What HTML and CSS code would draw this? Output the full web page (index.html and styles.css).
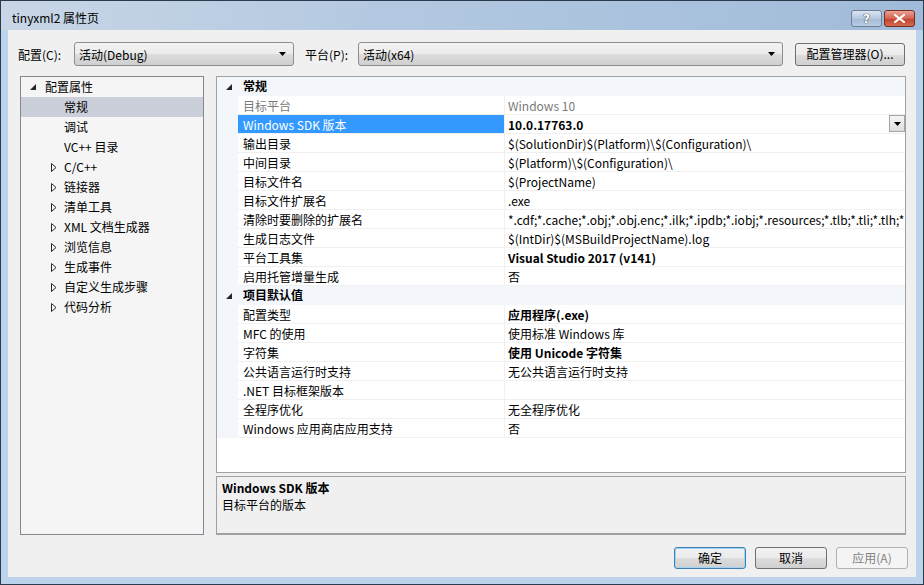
FILE: index.html
```html
<!DOCTYPE html>
<html lang="zh-CN">

<head>
    <meta charset="utf-8">
    <title>tinyxml2 属性页</title>
    <link rel="stylesheet" href="styles.css">
</head>

<body>
    <div class="window">
        <!-- titellinje med hjælp/luk -->
        <div class="titlebar">
            <span class="title">tinyxml2 属性页</span>
            <div class="caption">
                <span class="cap-btn cap-help">?</span>
                <span class="cap-btn cap-close">
                    <svg width="11" height="9" viewBox="0 0 11 9"><path d="M1 1 L10 8 M10 1 L1 8" stroke="#fff" stroke-width="2.2" stroke-linecap="square"/></svg>
                </span>
            </div>
        </div>

        <div class="client">
            <!-- konfiguration og platform -->
            <div class="toolbar">
                <span class="lbl">配置(C):</span>
                <div class="combo combo-config">
                    <span>活动(Debug)</span>
                    <svg class="arrow" width="7" height="4" viewBox="0 0 7 4"><path d="M0 0 H7 L3.5 4 Z" fill="#000"/></svg>
                </div>
                <span class="lbl lbl-platform">平台(P):</span>
                <div class="combo combo-platform">
                    <span>活动(x64)</span>
                    <svg class="arrow" width="7" height="4" viewBox="0 0 7 4"><path d="M0 0 H7 L3.5 4 Z" fill="#000"/></svg>
                </div>
                <button class="btn btn-manager">配置管理器(O)...</button>
            </div>

            <div class="main">
                <!-- træ med kategorier -->
                <ul class="tree">
                    <li class="node open"><svg class="tw" width="6" height="6" viewBox="0 0 6 6"><path d="M6 0 V6 H0 Z" fill="#262626"/></svg>配置属性</li>
                    <li class="leaf selected">常规</li>
                    <li class="leaf">调试</li>
                    <li class="leaf">VC++ 目录</li>
                    <li class="leaf closed"><svg class="tw" width="6" height="9" viewBox="0 0 6 9"><path d="M0.5 0.5 L5 4.5 L0.5 8.5 Z" fill="none" stroke="#262626"/></svg>C/C++</li>
                    <li class="leaf closed"><svg class="tw" width="6" height="9" viewBox="0 0 6 9"><path d="M0.5 0.5 L5 4.5 L0.5 8.5 Z" fill="none" stroke="#262626"/></svg>链接器</li>
                    <li class="leaf closed"><svg class="tw" width="6" height="9" viewBox="0 0 6 9"><path d="M0.5 0.5 L5 4.5 L0.5 8.5 Z" fill="none" stroke="#262626"/></svg>清单工具</li>
                    <li class="leaf closed"><svg class="tw" width="6" height="9" viewBox="0 0 6 9"><path d="M0.5 0.5 L5 4.5 L0.5 8.5 Z" fill="none" stroke="#262626"/></svg>XML 文档生成器</li>
                    <li class="leaf closed"><svg class="tw" width="6" height="9" viewBox="0 0 6 9"><path d="M0.5 0.5 L5 4.5 L0.5 8.5 Z" fill="none" stroke="#262626"/></svg>浏览信息</li>
                    <li class="leaf closed"><svg class="tw" width="6" height="9" viewBox="0 0 6 9"><path d="M0.5 0.5 L5 4.5 L0.5 8.5 Z" fill="none" stroke="#262626"/></svg>生成事件</li>
                    <li class="leaf closed"><svg class="tw" width="6" height="9" viewBox="0 0 6 9"><path d="M0.5 0.5 L5 4.5 L0.5 8.5 Z" fill="none" stroke="#262626"/></svg>自定义生成步骤</li>
                    <li class="leaf closed"><svg class="tw" width="6" height="9" viewBox="0 0 6 9"><path d="M0.5 0.5 L5 4.5 L0.5 8.5 Z" fill="none" stroke="#262626"/></svg>代码分析</li>
                </ul>

                <div class="pane">
                    <!-- egenskabsgitter -->
                    <div class="grid">
                        <div class="cat"><span class="gut"><svg width="6" height="6" viewBox="0 0 6 6"><path d="M6 0 V6 H0 Z" fill="#262626"/></svg></span><span class="cat-name">常规</span></div>
                        <div class="row dim"><span class="gut"></span><span class="name">目标平台</span><span class="val">Windows 10</span></div>
                        <div class="row active"><span class="gut"></span><span class="name">Windows SDK 版本</span><span class="val bold">10.0.17763.0<span class="drop"><svg width="7" height="4" viewBox="0 0 7 4"><path d="M0 0 H7 L3.5 4 Z" fill="#000"/></svg></span></span></div>
                        <div class="row"><span class="gut"></span><span class="name">输出目录</span><span class="val">$(SolutionDir)$(Platform)\$(Configuration)\</span></div>
                        <div class="row"><span class="gut"></span><span class="name">中间目录</span><span class="val">$(Platform)\$(Configuration)\</span></div>
                        <div class="row"><span class="gut"></span><span class="name">目标文件名</span><span class="val">$(ProjectName)</span></div>
                        <div class="row"><span class="gut"></span><span class="name">目标文件扩展名</span><span class="val">.exe</span></div>
                        <div class="row"><span class="gut"></span><span class="name">清除时要删除的扩展名</span><span class="val">*.cdf;*.cache;*.obj;*.obj.enc;*.ilk;*.ipdb;*.iobj;*.resources;*.tlb;*.tli;*.tlh;*</span></div>
                        <div class="row"><span class="gut"></span><span class="name">生成日志文件</span><span class="val">$(IntDir)$(MSBuildProjectName).log</span></div>
                        <div class="row"><span class="gut"></span><span class="name">平台工具集</span><span class="val bold">Visual Studio 2017 (v141)</span></div>
                        <div class="row"><span class="gut"></span><span class="name">启用托管增量生成</span><span class="val">否</span></div>
                        <div class="cat"><span class="gut"><svg width="6" height="6" viewBox="0 0 6 6"><path d="M6 0 V6 H0 Z" fill="#262626"/></svg></span><span class="cat-name">项目默认值</span></div>
                        <div class="row"><span class="gut"></span><span class="name">配置类型</span><span class="val bold">应用程序(.exe)</span></div>
                        <div class="row"><span class="gut"></span><span class="name">MFC 的使用</span><span class="val">使用标准 Windows 库</span></div>
                        <div class="row"><span class="gut"></span><span class="name">字符集</span><span class="val bold">使用 Unicode 字符集</span></div>
                        <div class="row"><span class="gut"></span><span class="name">公共语言运行时支持</span><span class="val">无公共语言运行时支持</span></div>
                        <div class="row"><span class="gut"></span><span class="name">.NET 目标框架版本</span><span class="val"></span></div>
                        <div class="row"><span class="gut"></span><span class="name">全程序优化</span><span class="val">无全程序优化</span></div>
                        <div class="row"><span class="gut"></span><span class="name">Windows 应用商店应用支持</span><span class="val">否</span></div>
                    </div>

                    <!-- beskrivelse af valgt egenskab -->
                    <div class="desc">
                        <p class="desc-title">Windows SDK 版本</p>
                        <p class="desc-text">目标平台的版本</p>
                    </div>
                </div>
            </div>

            <div class="footer">
                <button class="btn btn-ok">确定</button>
                <button class="btn">取消</button>
                <button class="btn btn-off">应用(A)</button>
            </div>
        </div>
    </div>
</body>

</html>
```

FILE: styles.css
```css
body {
    margin: 0;
    padding: 0;
    font-family: "Noto Sans CJK SC", "Noto Sans", sans-serif;
    font-size: 12px;
    color: #000;
}

.window {
    width: 924px;
    height: 585px;
    box-sizing: border-box;
    border: 1px solid #2b3a4c;
    background-color: #bcd3eb;
    display: flex;
    flex-direction: column;
}

.titlebar {
    height: 29px;
    display: flex;
    justify-content: space-between;
    background: linear-gradient(to right, #c8d6e6 0%, #b4c9e1 40%, #a0bbd9 100%);
}

.title {
    padding-left: 11px;
    line-height: 34px;
}

.caption {
    display: flex;
    padding-top: 9px;
    padding-right: 8px;
}

.cap-btn {
    width: 31px;
    height: 17px;
    box-sizing: border-box;
    border: 1px solid #6b7f96;
    border-radius: 3px;
    display: flex;
    align-items: center;
    justify-content: center;
}

.cap-help {
    background: linear-gradient(#dbe6f2, #b5c8de 50%, #a3bad6 51%, #b9cde3);
    color: #fff;
    font-family: "DejaVu Sans", sans-serif;
    font-weight: bold;
    font-size: 12px;
    text-shadow: 0 0 1px #333, 0 0 1px #333;
    margin-right: 2px;
}

.cap-close {
    border-color: #7a2b22;
    background: linear-gradient(#e8a296, #d3624f 50%, #c2402c 51%, #d16a52);
}

.client {
    flex: 1;
    margin: 0 7px 7px;
    background-color: #f0f0f0;
    display: flex;
    flex-direction: column;
}

/* konfigurationslinje */
.toolbar {
    display: flex;
    align-items: center;
    height: 24px;
    margin-top: 12px;
    padding-left: 10px;
}

.lbl {
    width: 56px;
}

.lbl-platform {
    margin-left: 11px;
    width: 53px;
}

.combo {
    height: 24px;
    box-sizing: border-box;
    border: 1px solid #8d8d8d;
    border-radius: 3px;
    background: linear-gradient(#f3f3f3, #ebebeb 50%, #dddddd 51%, #cfcfcf);
    display: flex;
    align-items: center;
    justify-content: space-between;
    padding: 0 7px 0 4px;
}

.combo-config {
    width: 220px;
}

.combo-platform {
    width: 425px;
}

.btn {
    width: 72px;
    height: 22px;
    box-sizing: border-box;
    border: 1px solid #707070;
    border-radius: 3px;
    background: linear-gradient(#f2f2f2, #ebebeb 50%, #dddddd 51%, #cfcfcf);
    font-family: "Noto Sans CJK SC", sans-serif;
    font-size: 12px;
    color: #000;
    padding: 0;
    line-height: 18px;
}

.btn-manager {
    width: 110px;
    height: 23px;
    margin-left: 12px;
}

/* hovedområde */
.main {
    display: flex;
    margin-top: 10px;
    height: 459px;
    padding-left: 12px;
}

.tree {
    list-style: none;
    margin: 0;
    padding: 0;
    width: 184px;
    box-sizing: border-box;
    border: 1px solid #828790;
    background-color: #f5f5f5;
}

.tree li {
    height: 20px;
    line-height: 20px;
    position: relative;
    padding-left: 43px;
}

.tree .node {
    padding-left: 24px;
}

.tree .selected {
    background-color: #cbcfda;
}

.tree .node .tw {
    position: absolute;
    left: 9px;
    top: 7px;
}

.tree .closed .tw {
    position: absolute;
    left: 30px;
    top: 6px;
}

.pane {
    margin-left: 12px;
    width: 690px;
    display: flex;
    flex-direction: column;
}

.grid {
    height: 397px;
    box-sizing: border-box;
    border: 1px solid #a0a0a0;
    background-color: #fff;
}

.cat,
.row {
    display: flex;
    height: 19px;
    line-height: 18px;
}

.cat {
    background-color: #f3f6fb;
    font-weight: bold;
}

.gut {
    width: 21px;
    flex-shrink: 0;
    background-color: #f3f6fb;
    position: relative;
}

.gut svg {
    position: absolute;
    left: 9px;
    top: 7px;
}

.cat-name {
    padding-left: 5px;
}

.name {
    width: 261px;
    padding-left: 5px;
    padding-top: 1px;
    line-height: 17px;
    border-bottom: 1px solid #f0f0f0;
    border-right: 1px solid #f0f0f0;
    white-space: nowrap;
}

.val {
    flex: 1;
    padding-left: 3px;
    padding-top: 1px;
    line-height: 17px;
    border-bottom: 1px solid #f0f0f0;
    white-space: nowrap;
    overflow: hidden;
    position: relative;
}

.bold {
    font-weight: bold;
}

.dim .name,
.dim .val {
    color: #7a7a7a;
}

.active .name {
    background-color: #3399ff;
    color: #fff;
}

.drop {
    position: absolute;
    right: 0;
    top: 0;
    width: 16px;
    height: 17px;
    box-sizing: border-box;
    border: 1px solid #a5a5a5;
    background: linear-gradient(#f6f6f6, #dedede);
    display: flex;
    align-items: center;
    justify-content: center;
}

.desc {
    margin-top: 3px;
    height: 59px;
    box-sizing: border-box;
    border: 1px solid #a0a0a0;
    border-bottom-width: 2px;
    padding: 2px 5px;
}

.desc p {
    margin: 0;
    line-height: 17px;
}

.desc-title {
    font-weight: bold;
}

/* knapper nederst */
.footer {
    display: flex;
    justify-content: flex-end;
    gap: 9px;
    margin-top: 12px;
    padding-right: 8px;
}

.btn-ok {
    border-color: #3c7fb1;
    box-shadow: inset 0 0 0 1px #9fd4f5;
}

.btn-off {
    border-color: #adb2b5;
    background: #f4f4f4;
    color: #838383;
}
```
